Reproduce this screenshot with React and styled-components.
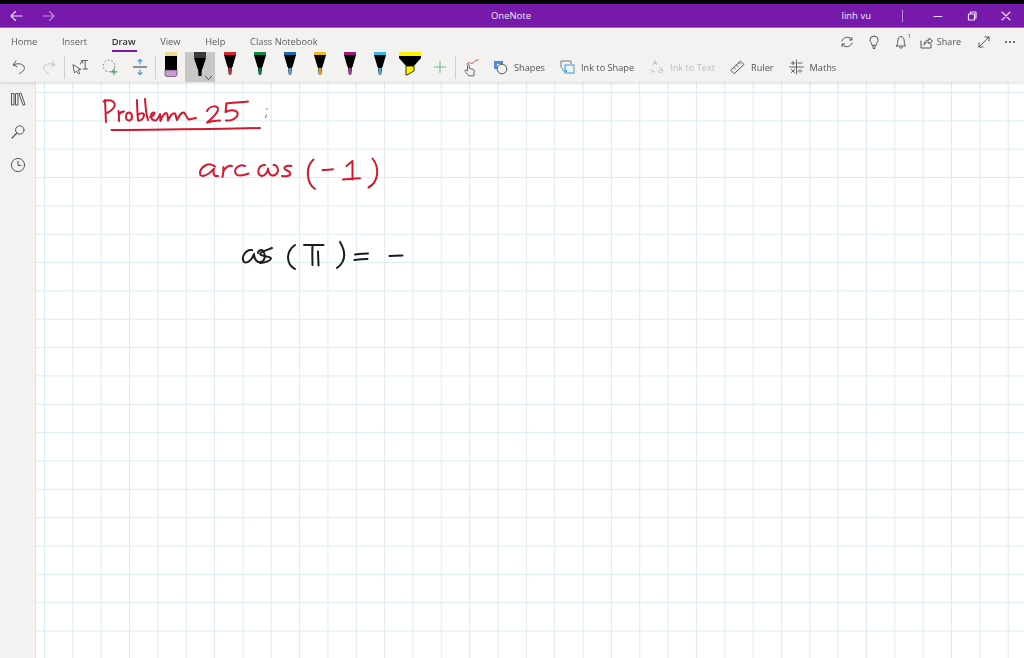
import React from "react";
import styled, { createGlobalStyle } from "styled-components";

const Global = createGlobalStyle`
  html, body { margin: 0; padding: 0; background: #fff; }
  body { font-family: "Open Sans", "Noto Sans", "Liberation Sans", sans-serif; overflow: hidden; }
`;

const Page = styled.div`
  width: 1024px; height: 658px; display: flex; flex-direction: column; overflow: hidden;
  filter: blur(0.35px);
`;
const TopEdge = styled.div`height: 4px; background: #000; flex: none;`;
const TitleBar = styled.header`
  height: 24px; box-sizing: border-box; flex: none; background: #7719aa; border-bottom: 1px solid #a66fc6; color: #f0e4f6;
  display: grid; grid-template-columns: 1fr auto 1fr; align-items: center; font-size: 9.5px;
`;
const NavGroup = styled.div`display: flex; align-items: center; gap: 19px; padding-left: 9px;`;
const NavButton = styled.span`display: flex; opacity: ${p => (p.$dim ? 0.6 : 1)};`;
const AppName = styled.div`letter-spacing: 0; transform: translateX(-1px);`;
const WindowGroup = styled.div`display: flex; align-items: center; justify-content: flex-end;`;
const UserName = styled.span`margin-right: 31px;`;
const TitleRule = styled.span`width: 1px; height: 12px; background: #b78bd0; margin-right: 29px;`;
const WinButton = styled.span`width: 12px; height: 12px; display: flex; margin-right: ${p => p.$gap}px;`;

const Ribbon = styled.div`
  flex: none; height: 54px; background: #f3f2f1; display: flex; flex-direction: column;
  position: relative; z-index: 2; box-shadow: 0 1px 3px rgba(0,0,0,.16);
`;
const TabRow = styled.div`height: 24px; display: flex; align-items: center; padding-left: 11px; position: relative;`;
const Tabs = styled.nav`display: flex; gap: 24.7px; flex: 1; height: 100%; align-items: center;`;
const Tab = styled.span`
  font-size: 9.3px; color: ${p => (p.$active ? "#333" : "#5c5c5c")}; font-weight: ${p => (p.$active ? 600 : 400)};
  height: 100%; display: flex; align-items: center; position: relative; padding-top: 3px; box-sizing: border-box;
  ${p => p.$active && `&::after { content: ""; position: absolute; left: 0; right: -1px; bottom: 0; height: 2px; background: #7719aa; }`}
`;
const RightTools = styled.div`display: flex; align-items: center; color: #555; font-size: 9px; padding-top: 3px;`;
const RightIcon = styled.span`display: flex; width: ${p => p.$w || 14}px; margin-right: ${p => p.$gap}px;`;
const BellWrap = styled.span`display: flex; position: relative; margin-right: 12px; width: 14px;`;
const Sup = styled.span`position: absolute; right: -3px; top: -3px; font-size: 6px; color: #555;`;
const ShareBox = styled.span`display: flex; align-items: center; gap: 4px; margin-right: 16px;`;

const ToolRow = styled.div`height: 30px; display: flex; align-items: stretch; padding-left: 4px;`;
const Slot = styled.span`
  width: ${p => p.$w || 30}px; flex: none; display: flex; justify-content: center;
  align-items: ${p => (p.$top ? "flex-start" : "center")};
  position: relative; background: ${p => (p.$on ? "#c9c8c6" : "transparent")};
`;
const Rule = styled.span`width: 1px; flex: none; background: #cfcecc; margin: 4px 0 3px;`;
const Labeled = styled.div`display: flex; align-items: center; gap: 15px; margin-left: 7px;`;
const ToolButton = styled.span`
  display: flex; align-items: center; gap: 6px; font-size: 9.2px; color: ${p => (p.$off ? "#bdbcba" : "#555")};
`;
const Chevron = styled.span`position: absolute; right: 2px; bottom: 1px; display: flex;`;

const Body = styled.main`flex: 1; display: flex; min-height: 0;`;
const SideBar = styled.aside`
  width: 35px; flex: none; background: #f3f2f1; border-right: 1px solid #e2e1df;
  display: flex; flex-direction: column; align-items: center; gap: 17px; padding: 9px 0 0 0; box-sizing: content-box;
`;
const SideIcon = styled.span`display: flex; width: 16px; height: 16px;`;
const Canvas = styled.div`
  flex: 1; position: relative; background-color: #fff;
  background-image:
    linear-gradient(to right, #dcecf2 1px, transparent 1px),
    linear-gradient(to bottom, #dcecf2 1px, transparent 1px);
  background-size: 28.35px 28.35px;
  background-position: 8px 10px;
`;
const InkLayer = styled.svg`position: absolute; left: 0; top: 0; overflow: visible;`;

const s = { fill: "none", stroke: "currentColor", strokeLinecap: "round", strokeLinejoin: "round" };

const Pen = ({ band, tip, top = "#000", dark }) => (
  <svg width="14" height="24" viewBox="0 0 14 24">
    <rect x="1" y="0" width="12" height={dark ? 6 : 3} fill={band} />
    <path d={dark ? "M1 6H13L9.4 17H4.6Z" : "M1 3H13L9.5 15H4.5Z"} fill={top} />
    <path d={dark ? "M5 16H9L8.5 24H5.5Z" : "M4.8 14H9.2L8.2 22.5H5.8Z"} fill="#000" />
    {!dark && <path d="M5.4 16H8.6L8 22.5H6Z" fill={tip} />}
  </svg>
);

const FirstPen = () => (
  <svg width="14" height="26" viewBox="0 0 14 26">
    <rect x="1" y="0" width="12" height="4" fill="#f0d98a" />
    <rect x="1" y="4" width="12" height="14" fill="#000" />
    <path d="M1 18H13V22.5Q13 24.5 11 24.5H3Q1 24.5 1 22.5Z" fill="#c99ad8" stroke="#333" strokeWidth=".6" />
  </svg>
);

const Highlighter = () => (
  <svg width="22" height="24" viewBox="0 0 22 24">
    <rect x="0" y="0" width="22" height="4" fill="#fff200" />
    <path d="M0 4H22V6L15 14H7L0 6Z" fill="#000" />
    <path d="M7 14H15V19L8 23H7Z" fill="#fff200" stroke="#000" strokeWidth=".8" />
  </svg>
);

const pens = [
  ["#d9232e", "#c2303a"], ["#0a8a46", "#0a7a45"], ["#1a67a8", "#5ba3d0"],
  ["#f4b91f", "#d4a72c"], ["#a0147e", "#a33a92"], ["#33b9ea", "#4aa7d0"],
];

const inkRed = [
  "M105 100C105.5 107 105.5 114 106 122",
  "M103.5 101.5C115 97 120 107 107 113",
  "M118.5 111C119 115 119 118 119 121M119 114.5C120.5 112 122 111.5 124 111.5",
  "M129 112.5C125 113 125 121 129 120.5C133 120 133 113 129 112.5Z",
  "M137 100C137 107 137.5 114 138 120.5C140 121 144 119 144 115C144 112.5 140 112.5 138 115",
  "M145 99C145.5 107 146 114 148 120",
  "M150 117C154 116 156 112.5 153.5 112.5C150 112.5 150 120 155 120.5C157 120.5 159 117 160 114C160.5 117 160 119 160.5 121C162 116 165 112 167 113.5C168 115 167.5 118 168 120.5C170 116 173 112 175 113.5C176 115 176 118 177 120C179 116 181 112 184 112.5C186 114 186 118 189 119.5L196 118",
  "M207 111C210 105 219 105 218 110C217 114 210 120 207 122.5C212 121 216 120.5 220 120.5",
  "M226.5 103.5C233 103 241 102 248 101.5",
  "M226.5 103.5C226 106.5 226 109 225.5 112C231 109 239 110 237.5 115C236 119.5 230 121 226 120.5",
  "M111.5 130C160 129.5 210 129.5 260 128",
];
const inkRed2 = [
  "M215 166.5C209 161 200 167 200 173.5C200 178 208 176 214 168.5C213 172 213 177 218 176",
  "M223.5 167C223.5 170 223.5 173 222.5 177M223.5 171C226 167 229 165 232 166",
  "M245 166C239 163 232 170 236.5 174.5C240 177 245 175 248.5 173.5",
  "M265 165C258 165 256 174 261.5 176C265 176.5 268 171 268 168.5C268 173 271 177 275 175C280 172 278 165 273.5 165",
  "M291.5 166C286 165 281 168 287 170.5C293 173 291 177 282 176",
  "M313.5 159.5C305 167 306.5 183 315 189",
  "M322.5 170C326 170 329 169.5 333 169.3",
  "M346.5 166L352.5 161V179.5M343 179.5C348 179 354 178.5 360 178.3",
  "M372.5 158.5C380 168 378.5 182 368.5 187.5",
];
const inkBlack = [
  "M252 250C245 249 241 258 244 262C247 264 252 260 254 254C254 259 257 263 261 262C265 261 266 255 263 251C261 249 258 251 258 253",
  "M272 248C267 250 260 252 260 254C262 257 271 256 271 258.5C270 261 265 263 260 263",
  "M295 245C286.5 251 285 263 295 269",
  "M304 245C311 245 319 245 323.5 245",
  "M312.5 246C312 253 312.5 259 312.5 265M318 251.5C318 256 318.5 261 318.5 265.5",
  "M340 242C346.5 253 345 262 337 268",
  "M355 254.5C359 254 364 253.5 368 253.5M354.5 260C358 259.5 363 259 367.5 259",
  "M389.5 256C394 255.7 398 255.6 402.5 255.5",
];

export default function App() {
  return (
    <Page>
      <Global />
      <TopEdge />
      <TitleBar>
        <NavGroup>
          <NavButton>
            <svg width="14" height="12" viewBox="0 0 14 12" color="#f1e3f8"><path {...s} strokeWidth="1.1" d="M13 6H2M6.5 1.5 2 6l4.5 4.5" /></svg>
          </NavButton>
          <NavButton $dim>
            <svg width="14" height="12" viewBox="0 0 14 12" color="#f1e3f8"><path {...s} strokeWidth="1.1" d="M1 6H12M7.5 1.5 12 6l-4.5 4.5" /></svg>
          </NavButton>
        </NavGroup>
        <AppName>OneNote</AppName>
        <WindowGroup>
          <UserName>linh vu</UserName>
          <TitleRule />
          <WinButton $gap={22}><svg width="12" height="12" color="#e9d9f2"><path {...s} d="M2 6.5H10" /></svg></WinButton>
          <WinButton $gap={22}><svg width="12" height="12" color="#f1e3f8"><path {...s} strokeLinecap="butt" strokeWidth="1.2" d="M2.5 4H8.5V10H2.5ZM4.5 4V2H10V8H8.5" /></svg></WinButton>
          <WinButton $gap={12}><svg width="12" height="12" color="#f1e3f8"><path {...s} strokeWidth="1.1" d="M2 2 10 10M10 2 2 10" /></svg></WinButton>
        </WindowGroup>
      </TitleBar>

      <Ribbon>
        <TabRow>
          <Tabs>
            <Tab>Home</Tab>
            <Tab>Insert</Tab>
            <Tab $active>Draw</Tab>
            <Tab>View</Tab>
            <Tab>Help</Tab>
            <Tab>Class Notebook</Tab>
          </Tabs>
          <RightTools>
            <RightIcon $gap={13}>
              <svg width="14" height="14" viewBox="0 0 14 14" color="#555"><path {...s} d="M2 6C2.8 3.2 6 1.5 9 2.6C10.2 3 11 3.8 11.7 4.8M12 8C11.2 10.8 8 12.5 5 11.4C3.8 11 3 10.2 2.3 9.2M11.9 2.4V5H9.4M2.1 11.6V9H4.6" /></svg>
            </RightIcon>
            <RightIcon $gap={13}>
              <svg width="14" height="14" viewBox="0 0 14 14" color="#555"><path {...s} d="M5 10C5 8 3 7.4 3 5A4 4 0 0 1 11 5C11 7.4 9 8 9 10ZM5.5 12H8.5M6.3 13.5H7.7" /></svg>
            </RightIcon>
            <BellWrap>
              <svg width="14" height="14" viewBox="0 0 14 14" color="#555"><path {...s} d="M2.5 11H11.5C10.5 9.5 10.3 8 10.2 6C10.1 3.5 9 1.5 7 1.5S3.9 3.5 3.8 6C3.7 8 3.5 9.5 2.5 11ZM5.5 12.5C6 13.5 8 13.5 8.5 12.5" /></svg>
              <Sup>1</Sup>
            </BellWrap>
            <ShareBox>
              <svg width="13" height="14" viewBox="0 0 13 14" color="#555"><path {...s} d="M1 6V13H11V9M4 9.5C4 7 6 5 9 5V3L12.5 6 9 9V7C7 7 5.5 7.8 4 9.5Z" /></svg>
              <span>Share</span>
            </ShareBox>
            <RightIcon $gap={13}>
              <svg width="14" height="14" viewBox="0 0 14 14" color="#555"><path {...s} d="M2 12 12 2M8 2H12V6M2 8V12H6" /></svg>
            </RightIcon>
            <RightIcon $w={12} $gap={8}>
              <svg width="12" height="14" viewBox="0 0 12 14"><g fill="#444"><circle cx="2" cy="7" r="1" /><circle cx="6" cy="7" r="1" /><circle cx="10" cy="7" r="1" /></g></svg>
            </RightIcon>
          </RightTools>
        </TabRow>

        <ToolRow>
          <Slot>
            <svg width="16" height="16" viewBox="0 0 16 16" color="#555"><path {...s} d="M5 2 2 6l4 1.5M2.3 6C6 3.8 12.5 4.3 13.3 8.5C13.8 11 11.5 13 8.5 14.5" /></svg>
          </Slot>
          <Slot>
            <svg width="16" height="16" viewBox="0 0 16 16" color="#c4c3c1"><path {...s} d="M11 2 14 6 10 7.5M13.7 6C10 3.8 3.5 4.3 2.7 8.5C2.2 11 4.5 13 7.5 14.5" /></svg>
          </Slot>
          <Rule />
          <Slot>
            <svg width="18" height="18" viewBox="0 0 18 18" color="#555"><path {...s} strokeWidth=".9" d="M2 7 3.5 15 5.5 13 7.5 16 9 15 7 12 9.5 11.5ZM12 2.5H16.5M14.2 2.5V11M12 11H16.5M9.5 6 11 2 12 5" /></svg>
          </Slot>
          <Slot>
            <svg width="18" height="18" viewBox="0 0 18 18"><circle cx="8" cy="8" r="5.8" fill="none" stroke="#8a8a8a" strokeDasharray="2 1.6" /><path d="M13 10.5V17M9.8 13.8H16.2" fill="none" stroke="#3f9c5a" strokeWidth="1.2" /></svg>
          </Slot>
          <Slot>
            <svg width="16" height="18" viewBox="0 0 16 18"><path d="M1 9H15" stroke="#777" strokeWidth="1.6" /><path d="M8 6.5V1.5M5.8 3.5 8 1.5 10.2 3.5M8 11.5V16.5M5.8 14.5 8 16.5 10.2 14.5" fill="none" stroke="#3b9ad6" strokeWidth="1.1" /></svg>
          </Slot>
          <Rule />
          <Slot $w={29} $top><FirstPen /></Slot>
          <Slot $on $top>
            <Pen band="#3c3c3c" top="#000" dark />
            <Chevron>
              <svg width="9" height="6" viewBox="0 0 9 6" color="#444"><path {...s} d="M1.5 1.5 4.5 4.5 7.5 1.5" /></svg>
            </Chevron>
          </Slot>
          {pens.map(([band, tip]) => (
            <Slot key={band} $top><Pen band={band} tip={tip} /></Slot>
          ))}
          <Slot $top><Highlighter /></Slot>
          <Slot>
            <svg width="14" height="14" viewBox="0 0 14 14"><path d="M7 1V13M1 7H13" stroke="#6fb58a" strokeWidth="1" /></svg>
          </Slot>
          <Rule />
          <Slot>
            <svg width="16" height="20" viewBox="0 0 16 20"><path d="M4 7C7 3 8 9 11 5C12 4 13 3 15 3" fill="none" stroke="#d2405a" strokeWidth="1" strokeLinecap="round" /><path {...s} color="#555" strokeWidth=".9" d="M5.5 18.5C3.5 16.5 2 14.5 2 13.5C2.5 12.5 3.5 13 4.5 14V8.5C4.5 7.3 6.3 7.3 6.3 8.5V11.5L10 12.3C11 12.6 11.3 13.2 11.2 14.2L10.8 18.5Z" /></svg>
          </Slot>
          <Labeled>
            <ToolButton>
              <svg width="15" height="16" viewBox="0 0 15 16"><path d="M1 2H10V5H4V10H1Z" fill="#4f8fd0" /><circle cx="9" cy="10" r="4.8" fill="#f3f2f1" stroke="#555" /></svg>
              <span>Shapes</span>
            </ToolButton>
            <ToolButton>
              <svg width="15" height="16" viewBox="0 0 15 16"><path d="M1 2H11V5M1 2V9" fill="none" stroke="#777" /><rect x="5" y="6" width="9" height="8" fill="none" stroke="#3b9ad6" /><path d="M3 9C2 10.5 2.5 12 4.5 12H7M5.5 10.5 7 12 5.5 13.5" fill="none" stroke="#3b9ad6" /></svg>
              <span>Ink to Shape</span>
            </ToolButton>
            <ToolButton $off>
              <svg width="15" height="16" viewBox="0 0 15 16"><path d="M1.5 10C1.5 12 3 12.5 5 12.5M3.5 11 5 12.5 3.5 14M4 6 6 1.5 8 6M4.7 4.5H7.3M10 9C13 8 13.5 10 13.5 13.5M13.5 11C10.5 10.5 9 11.5 9.5 13C10 14 12.5 14 13.5 12.5" fill="none" stroke="#c4c3c1" /></svg>
              <span>Ink to Text</span>
            </ToolButton>
            <ToolButton>
              <svg width="15" height="16" viewBox="0 0 15 16" color="#555"><path {...s} d="M1 11 10.5 2 14 5.5 4.5 14.5ZM4 8.5 5.5 10M6.5 6 8 7.5M9 3.5 10.5 5" /></svg>
              <span>Ruler</span>
            </ToolButton>
            <ToolButton>
              <svg width="15" height="16" viewBox="0 0 15 16" color="#555"><path {...s} strokeWidth=".9" d="M0.5 8H14.5M7.5 1V15M2 4H6M4 2.3V5.7M9 4H13M2.3 10.5 5.7 13.5M5.7 10.5 2.3 13.5M9 12H13" /><circle cx="11" cy="10.3" r=".5" fill="#555" /><circle cx="11" cy="13.7" r=".5" fill="#555" /></svg>
              <span>Maths</span>
            </ToolButton>
          </Labeled>
        </ToolRow>
      </Ribbon>

      <Body>
        <SideBar>
          <SideIcon>
            <svg width="16" height="16" viewBox="0 0 16 16" color="#555"><path {...s} strokeLinecap="butt" d="M1.5 2.5H4V14H1.5ZM5.5 2.5H8V14H5.5ZM9 2.7 11 2 15 13.5 13 14.2Z" /></svg>
          </SideIcon>
          <SideIcon>
            <svg width="16" height="16" viewBox="0 0 16 16" color="#555"><circle {...s} cx="9.8" cy="6" r="4.2" /><path {...s} strokeWidth="1.2" d="M6.8 9 2 14" /></svg>
          </SideIcon>
          <SideIcon>
            <svg width="16" height="16" viewBox="0 0 16 16" color="#555"><circle {...s} cx="8" cy="8" r="6.6" /><path {...s} d="M8 4.2V8.4H11" /></svg>
          </SideIcon>
        </SideBar>
        <Canvas>
          <InkLayer width="988" height="576" viewBox="36 82 988 576" fill="none" strokeLinecap="round" strokeLinejoin="round">
            <title>Problem 25: arccos(-1), cos(π) = -</title>
            <g stroke="#d3192f" strokeWidth="2">
              {inkRed.map(d => <path key={d} d={d} />)}
              {inkRed2.map(d => <path key={d} d={d} />)}
              <path d="M267 108.5V109.5M265.5 117.5 266.5 115" strokeWidth="1.2" opacity=".7" />
            </g>
            <g stroke="#1c1c1c" strokeWidth="2">
              {inkBlack.map(d => <path key={d} d={d} />)}
            </g>
          </InkLayer>
        </Canvas>
      </Body>
    </Page>
  );
}
